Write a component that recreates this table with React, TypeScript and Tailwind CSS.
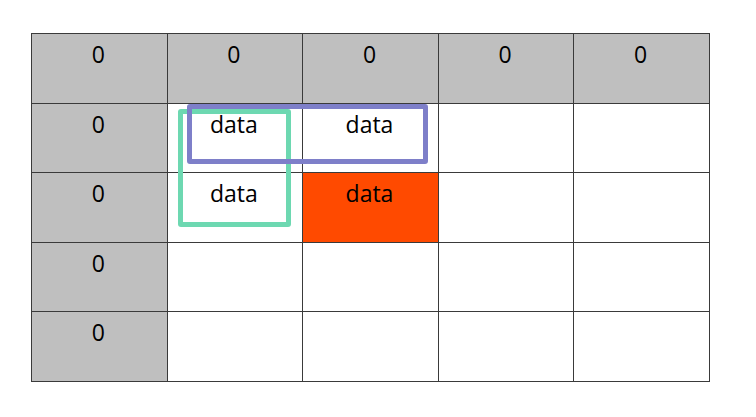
import React from "react";

const rows: { label: string; cells: { text: string; orange?: boolean }[] }[] = [
  { label: "0", cells: [{ text: "data" }, { text: "data" }, { text: "" }, { text: "" }] },
  { label: "0", cells: [{ text: "data" }, { text: "data", orange: true }, { text: "" }, { text: "" }] },
  { label: "0", cells: [{ text: "" }, { text: "" }, { text: "" }, { text: "" }] },
  { label: "0", cells: [{ text: "" }, { text: "" }, { text: "" }, { text: "" }] },
];

export default function App() {
  const cellBase =
    "h-[69.6px] border-r border-b border-[#3a3a3a] text-center text-[23px] leading-[31px] pt-[5px] pr-[2px] text-black";
  return (
    <div
      className="w-[756px] h-[417px] bg-white pl-[31px] pt-[33px]"
      style={{ fontFamily: '"Open Sans", "Noto Sans", sans-serif' }}
    >
      <div className="relative w-[679px]">
        <div className="grid grid-cols-5 border-l border-t border-[#3a3a3a]">
          {[0, 1, 2, 3, 4].map((i) => (
            <div key={"h" + i} className={cellBase + " bg-[#bfbfbf]"}>
              0
            </div>
          ))}
          {rows.map((r, ri) => (
            <React.Fragment key={ri}>
              <div className={cellBase + " bg-[#bfbfbf]"}>{r.label}</div>
              {r.cells.map((c, ci) => (
                <div key={ci} className={cellBase + (c.orange ? " bg-[#ff4a00]" : " bg-white")}>
                  {c.text}
                </div>
              ))}
            </React.Fragment>
          ))}
        </div>
        <div className="absolute left-[147px] top-[76px] w-[113px] h-[118px] border-[5px] border-[#6dd8b1] rounded-[3px]" />
        <div className="absolute left-[156px] top-[71px] w-[241px] h-[60px] border-[5px] border-[#7e7fc9] rounded-[3px]" />
      </div>
    </div>
  );
}
